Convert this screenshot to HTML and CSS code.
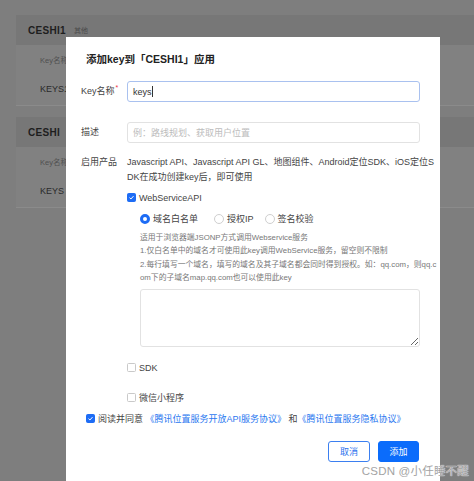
FILE: index.html
```html
<!DOCTYPE html>
<html lang="zh">
<head>
<meta charset="utf-8">
<title>添加key</title>
<link rel="stylesheet" href="styles.css">
</head>
<body>
<div class="page">
  <section class="card">
    <div class="card-head"><span class="card-name">CESHI1</span><span class="card-tag">其他</span></div>
    <div class="card-row sub">Key名称</div>
    <div class="card-row key">KEYS1</div>
  </section>
  <section class="card">
    <div class="card-head"><span class="card-name">CESHI</span></div>
    <div class="card-row sub">Key名称</div>
    <div class="card-row key">KEYS</div>
  </section>
</div>

<div class="modal">
  <h2 class="modal-title">添加key到「CESHI1」应用</h2>
  <div class="form">
    <div class="row row-key">
      <label class="label">Key名称<span class="req">*</span></label>
      <div class="input focus"><span class="val">keys</span><span class="caret"></span></div>
    </div>
    <div class="row row-desc">
      <label class="label">描述</label>
      <div class="input"><span class="ph">例：路线规划、获取用户位置</span></div>
    </div>
    <div class="row row-prod">
      <label class="label">启用产品</label>
      <div class="prod">
        <p class="prod-text"><span class="line">Javascript API、Javascript API GL、地图组件、Android定位SDK、iOS定位S</span><span class="line">DK在成功创建key后，即可使用</span></p>
        <div class="check ws"><span class="box on"><svg viewBox="0 0 10 10"><path d="M2.2 5.2 4.2 7.1 7.9 3" fill="none" stroke="#fff" stroke-width="1.4"/></svg></span>WebServiceAPI</div>
        <div class="sub-block">
          <div class="radios">
            <span class="radio"><span class="dot on"></span>域名白名单</span>
            <span class="radio"><span class="dot"></span>授权IP</span>
            <span class="radio"><span class="dot"></span>签名校验</span>
          </div>
          <div class="help">
            <span class="line">适用于浏览器端JSONP方式调用Webservice服务</span>
            <span class="line">1.仅白名单中的域名才可使用此key调用WebService服务，留空则不限制</span>
            <span class="line">2.每行填写一个域名，填写的域名及其子域名都会同时得到授权。如：qq.com，则qq.c</span>
            <span class="line">om下的子域名map.qq.com也可以使用此key</span>
          </div>
          <textarea class="area"></textarea>
        </div>
        <div class="check sdk"><span class="box"></span>SDK</div>
        <div class="check mini"><span class="box"></span>微信小程序</div>
      </div>
    </div>
    <div class="check agree"><span class="box on"><svg viewBox="0 0 10 10"><path d="M2.2 5.2 4.2 7.1 7.9 3" fill="none" stroke="#fff" stroke-width="1.4"/></svg></span>阅读并同意 <a class="link">《腾讯位置服务开放API服务协议》</a> 和<a class="link">《腾讯位置服务隐私协议》</a></div>
    <div class="actions">
      <button class="btn ghost">取消</button>
      <button class="btn primary">添加</button>
    </div>
  </div>
</div>

<div class="watermark">CSDN @小任睡不醒</div>
</body>
</html>
```

FILE: styles.css
```css
* { box-sizing: border-box; }
html, body { margin: 0; padding: 0; }
body {
  width: 474px;
  height: 481px;
  overflow: hidden;
  position: relative;
  background: #7e7e7e;
  font-family: "Liberation Sans", "Noto Sans CJK SC", sans-serif;
  color: #333;
}

/* dimmed background page */
.page { padding: 15px 0 0 16px; }
.card {
  background: #818181;
  border-bottom: 1px solid #8b8b8b;
  margin-bottom: 11px;
}
.card-head {
  height: 30px;
  background: #777;
  display: flex;
  align-items: center;
  padding-left: 12px;
}
.card-name { font-size: 10px; font-weight: bold; color: #1e1e1e; letter-spacing: 0.3px; }
.card-tag { font-size: 7px; color: #4a4a4a; margin-left: 8px; }
.card-row { display: flex; align-items: center; padding-left: 24px; }
.card-row.sub { height: 28px; font-size: 7.5px; color: #505050; }
.card-row.key { height: 32px; font-size: 9px; color: #2a2a2a; }

/* modal */
.modal {
  position: absolute;
  left: 66px;
  top: 37px;
  width: 374px;
  height: 460px;
  background: #fff;
  padding: 15px 20px 0 15px;
}
.modal-title {
  margin: 0 0 0 5px;
  font-size: 10.5px;
  line-height: 14px;
  font-weight: 600;
  color: #222;
}
.form { margin-top: 15px; font-size: 9px; }
.row { display: grid; grid-template-columns: 46px 1fr; }
.label { color: #444; font-size: 9px; line-height: 21px; }
.req { color: #e34; font-size: 7px; vertical-align: top; line-height: 14px; margin-left: 1px; }
.input {
  height: 21px;
  border: 1px solid #e2e2e2;
  border-radius: 3px;
  padding: 0 5px;
  display: flex;
  align-items: center;
}
.input.focus { border-color: #a9c1ef; }
.val { color: #333; }
.caret { width: 1px; height: 11px; background: #333; margin-left: 0; }
.ph { color: #bcbcbc; }
.row-desc { margin-top: 20px; }

.row-prod { margin-top: 12px; }
.row-prod .label { line-height: 15px; }
.prod-text { margin: 0; line-height: 15px; color: #444; }
.line { display: block; white-space: nowrap; }

.check { display: flex; align-items: center; height: 14px; color: #444; }
.box {
  width: 9px; height: 9px;
  border: 1px solid #c9c9c9;
  border-radius: 1.5px;
  background: #fff;
  margin-right: 3px;
  flex: none;
  display: flex;
}
.box.on { background: #1d6cf5; border-color: #1d6cf5; }
.box svg { width: 100%; height: 100%; }
.ws { margin-top: 5.5px; }

.sub-block { padding-left: 13px; }
.radios { display: flex; align-items: center; height: 14px; margin-top: 7px; color: #444; }
.radio { display: flex; align-items: center; margin-right: 16px; }
.radio:nth-child(2) { margin-right: 11px; }
.dot {
  width: 10px; height: 10px;
  border: 1px solid #cfcfcf;
  border-radius: 50%;
  margin-right: 3px;
  background: #fff;
}
.dot.on { border: 3px solid #1d6cf5; }
.help { margin-top: 5px; font-size: 7.8px; line-height: 13.5px; color: #777; }
.area {
  display: block;
  margin: 4px 0 0;
  width: 280px;
  height: 58px;
  border: 1px solid #e2e2e2;
  border-radius: 3px;
  font: inherit;
}
.sdk { margin-top: 14px; }
.mini { margin-top: 16px; }

.agree { margin-top: 7px; margin-left: 5px; white-space: pre; }
.link { color: #2b78f0; }

.actions { display: flex; justify-content: flex-end; gap: 8px; margin-top: 15px; padding-right: 1px; }
.btn {
  height: 21px;
  width: 42px;
  border-radius: 3px;
  font: inherit;
  font-size: 9px;
  padding: 0;
}
.btn.ghost { background: #fff; border: 1px solid #3b7ff0; color: #2b72ee; }
.btn.primary { background: #0b6cfb; border: 1px solid #0b6cfb; color: #fff; width: 41px; }

.watermark {
  position: absolute;
  right: 5px;
  bottom: 3px;
  font-size: 11.5px;
  color: #a3a3a3;
  text-shadow: 0 0 1px #fff, 0 0 1px #fff;
  letter-spacing: 0.2px;
}
```
